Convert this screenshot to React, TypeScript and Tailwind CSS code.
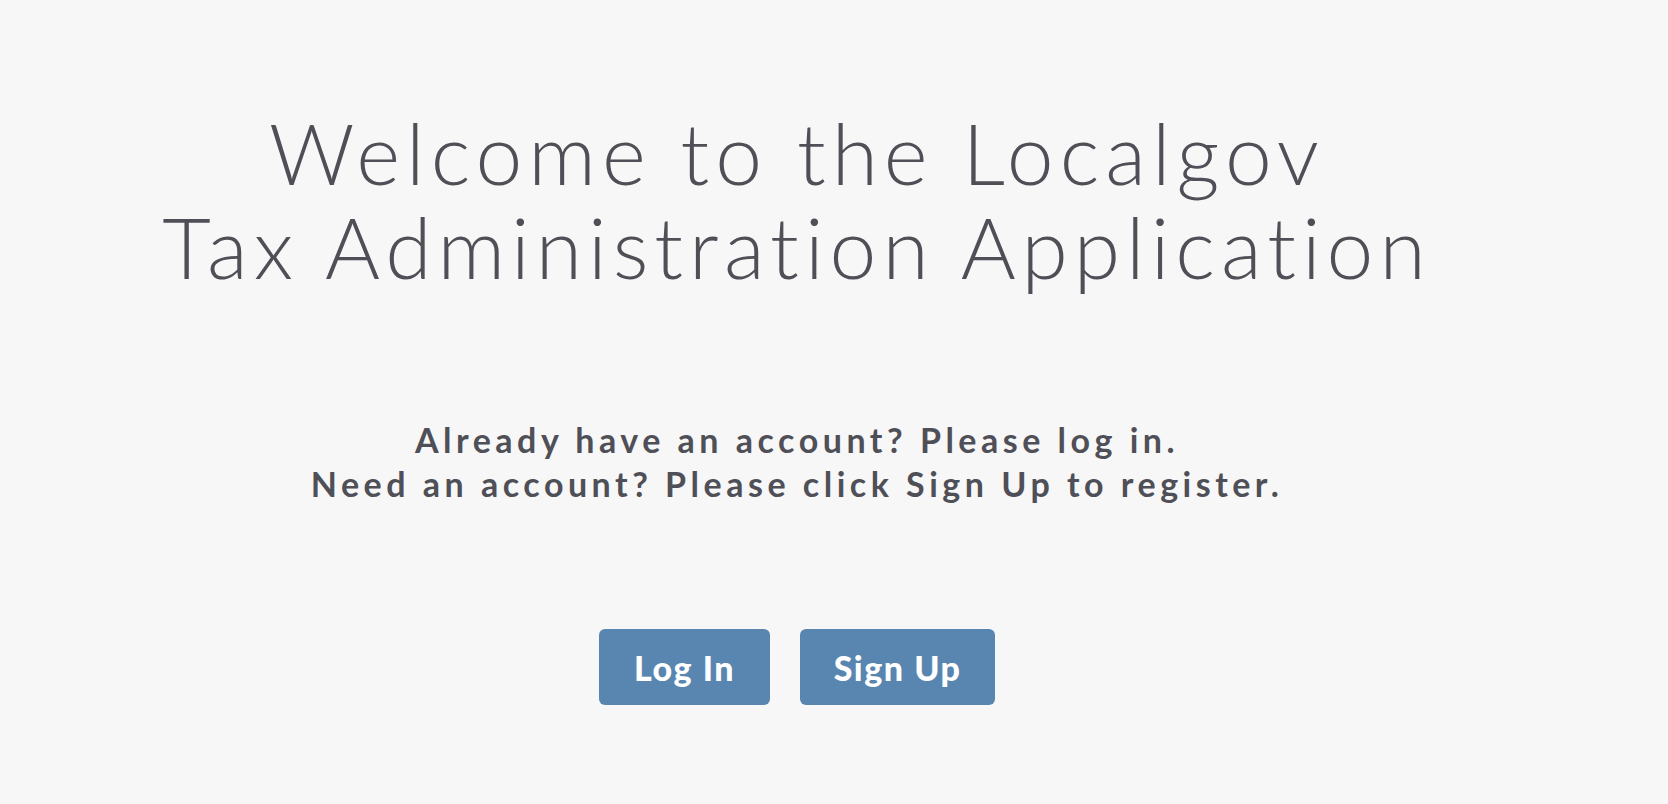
export default function App() {
  return (
    <div className="min-h-screen bg-[#f7f7f7] text-[#4f4f57]">
      <main className="w-[1594px] flex flex-col items-center text-center font-['Lato',sans-serif]">
        <h1 className="mt-[106px] text-[84px] leading-[94px] font-light tracking-[6px]">
          Welcome to the Localgov
          <br />
          Tax Administration Application
        </h1>
        <p className="mt-[124px] text-[34px] leading-[44px] font-bold tracking-[4.5px]">
          Already have an account? Please log in.
          <br />
          Need an account? Please click Sign Up to register.
        </p>
        <div className="mt-[123px] flex gap-[30px]">
          <button className="w-[171px] h-[76px] rounded-md bg-[#5886b0] text-white text-[34px] font-black tracking-[1.5px]">
            Log In
          </button>
          <button className="w-[195px] h-[76px] rounded-md bg-[#5886b0] text-white text-[34px] font-black tracking-[1.5px]">
            Sign Up
          </button>
        </div>
      </main>
    </div>
  );
}
